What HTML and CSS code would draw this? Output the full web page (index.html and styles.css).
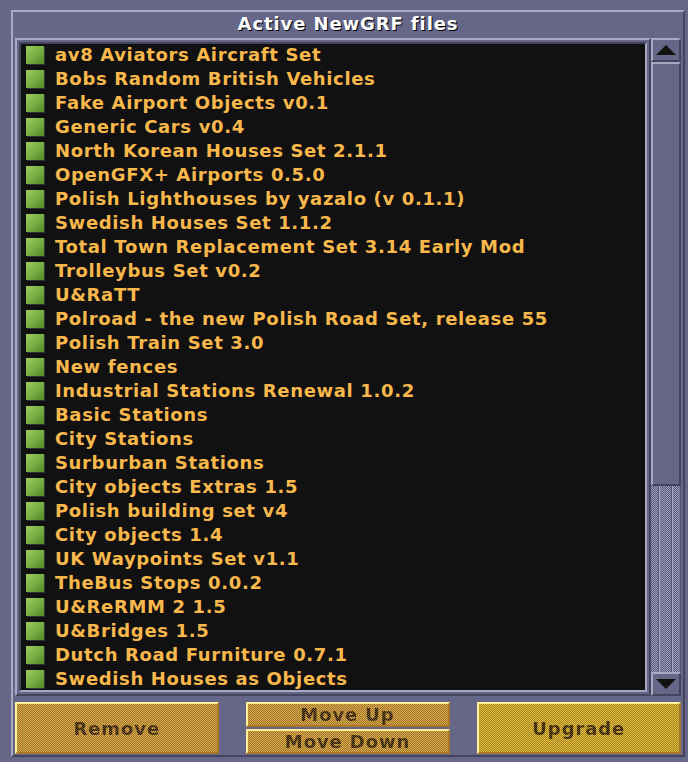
FILE: index.html
```html
<!DOCTYPE html>
<html lang="en">
<head>
    <meta charset="UTF-8">
    <title>Active NewGRF files</title>
    <link rel="stylesheet" href="styles.css">
</head>
<body>
    <div class="window">
        <div class="title">Active NewGRF files</div>

        <div class="content">
            <div class="panel">
                <ul class="grf-list">
                    <li><span class="dot"></span>av8 Aviators Aircraft Set</li>
                    <li><span class="dot"></span>Bobs Random British Vehicles</li>
                    <li><span class="dot"></span>Fake Airport Objects v0.1</li>
                    <li><span class="dot"></span>Generic Cars v0.4</li>
                    <li><span class="dot"></span>North Korean Houses Set 2.1.1</li>
                    <li><span class="dot"></span>OpenGFX+ Airports 0.5.0</li>
                    <li><span class="dot"></span>Polish Lighthouses by yazalo (v 0.1.1)</li>
                    <li><span class="dot"></span>Swedish Houses Set 1.1.2</li>
                    <li><span class="dot"></span>Total Town Replacement Set 3.14 Early Mod</li>
                    <li><span class="dot"></span>Trolleybus Set v0.2</li>
                    <li><span class="dot"></span>U&amp;RaTT</li>
                    <li><span class="dot"></span>Polroad - the new Polish Road Set, release 55</li>
                    <li><span class="dot"></span>Polish Train Set 3.0</li>
                    <li><span class="dot"></span>New fences</li>
                    <li><span class="dot"></span>Industrial Stations Renewal 1.0.2</li>
                    <li><span class="dot"></span>Basic Stations</li>
                    <li><span class="dot"></span>City Stations</li>
                    <li><span class="dot"></span>Surburban Stations</li>
                    <li><span class="dot"></span>City objects Extras 1.5</li>
                    <li><span class="dot"></span>Polish building set v4</li>
                    <li><span class="dot"></span>City objects 1.4</li>
                    <li><span class="dot"></span>UK Waypoints Set v1.1</li>
                    <li><span class="dot"></span>TheBus Stops 0.0.2</li>
                    <li><span class="dot"></span>U&amp;ReRMM 2 1.5</li>
                    <li><span class="dot"></span>U&amp;Bridges 1.5</li>
                    <li><span class="dot"></span>Dutch Road Furniture 0.7.1</li>
                    <li><span class="dot"></span>Swedish Houses as Objects</li>
                </ul>
            </div>

            <div class="scrollbar">
                <div class="scroll-btn"><span class="arrow up"></span></div>
                <div class="scroll-thumb"></div>
                <div class="scroll-track"></div>
                <div class="scroll-btn"><span class="arrow down"></span></div>
            </div>
        </div>

        <div class="buttons">
            <div class="btn"><span>Remove</span></div>
            <div class="btn-stack">
                <div class="btn small"><span>Move Up</span></div>
                <div class="btn small"><span>Move Down</span></div>
            </div>
            <div class="btn upgrade"><span>Upgrade</span></div>
        </div>
    </div>
</body>
</html>
```

FILE: styles.css
```css
* {
    box-sizing: border-box;
    margin: 0;
    padding: 0;
}

body {
    background-color: #666688;
    padding: 10px 0 0 11px;
    font-family: 'DejaVu Sans', Verdana, sans-serif;
    font-weight: bold;
    font-size: 18px;
    letter-spacing: 0.65px;
}

.window {
    width: 674px;
    height: 747px;
    border-top: 2px solid #a8a8c4;
    border-left: 2px solid #a8a8c4;
    border-right: 2px solid #44445c;
    border-bottom: 2px solid #44445c;
    padding: 0 2px;
    display: flex;
    flex-direction: column;
}

.title {
    height: 26px;
    line-height: 24px;
    text-align: center;
    color: #fcfcfc;
    letter-spacing: 0.9px;
    text-shadow: 1px 1px 0 #000;
}

.content {
    display: flex;
    height: 658px;
}

.panel {
    width: 636px;
    border-top: 2px solid #a8a8c4;
    border-left: 2px solid #a8a8c4;
    border-right: 2px solid #44445c;
    border-bottom: 2px solid #44445c;
    padding: 2px;
}

.grf-list {
    list-style: none;
    height: 100%;
    background-color: #111111;
    border-top: 2px solid #44445c;
    border-left: 2px solid #44445c;
    border-right: 2px solid #a8a8c4;
    border-bottom: 2px solid #a8a8c4;
    overflow: hidden;
}

.grf-list li {
    height: 24px;
    line-height: 20px;
    padding-bottom: 2px;
    display: flex;
    align-items: center;
    color: #f8b84c;
    white-space: nowrap;
}

.dot {
    width: 18px;
    height: 18px;
    margin: 0 11px 0 5px;
    background: linear-gradient(135deg, #9ccc5c, #74ac40 55%, #508828);
    box-shadow: 1px 1px 0 #333340;
    flex-shrink: 0;
}

.scrollbar {
    width: 30px;
    display: flex;
    flex-direction: column;
}

.scroll-btn {
    height: 24px;
    border-top: 2px solid #a8a8c4;
    border-left: 2px solid #a8a8c4;
    border-right: 2px solid #44445c;
    border-bottom: 2px solid #44445c;
    display: flex;
    justify-content: center;
    align-items: center;
}

.arrow {
    width: 0;
    height: 0;
    border-left: 10px solid transparent;
    border-right: 10px solid transparent;
}

.arrow.up {
    border-bottom: 10px solid #111111;
}

.arrow.down {
    border-top: 10px solid #111111;
}

.scroll-thumb {
    height: 424px;
    border-top: 2px solid #a8a8c4;
    border-left: 2px solid #a8a8c4;
    border-right: 2px solid #44445c;
    border-bottom: 2px solid #44445c;
}

.scroll-track {
    flex: 1;
    background:
        linear-gradient(90deg, transparent 7px, #56567a 7px, #56567a 8px, #a8a8c4 8px, #a8a8c4 9px, transparent 9px,
            transparent 20px, #56567a 20px, #56567a 21px, #a8a8c4 21px, #a8a8c4 22px, transparent 22px),
        repeating-conic-gradient(#a0a0bc 0 25%, #56567a 0 50%) 0 0 / 2px 2px;
    border-right: 1px solid #56567a;
}

.buttons {
    display: flex;
    gap: 27px;
    padding-top: 6px;
}

.btn-stack {
    width: 204px;
    height: 52px;
    display: flex;
    flex-direction: column;
    gap: 2px;
}

.btn {
    width: 204px;
    height: 52px;
    border-top: 2px solid #fcf09c;
    border-left: 2px solid #fcf09c;
    border-right: 2px solid #a87828;
    border-bottom: 2px solid #a87828;
    background: repeating-conic-gradient(#dcac48 0 25%, #9c7430 0 50%) 0 0 / 2px 2px;
    display: flex;
    justify-content: center;
    align-items: center;
    letter-spacing: 0.9px;
}

.btn span {
    background: repeating-conic-gradient(#181008 0 25%, #7c5c24 0 50%) 0 0 / 2px 2px;
    -webkit-background-clip: text;
    background-clip: text;
    color: transparent;
}

.btn.small {
    height: 25px;
}

.btn.upgrade {
    width: 205px;
    background: repeating-conic-gradient(#e4bc3c 0 25%, #a48424 0 50%) 0 0 / 2px 2px;
}
```
